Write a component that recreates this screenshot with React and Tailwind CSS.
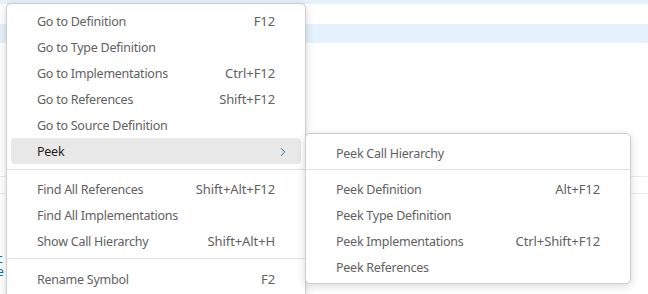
import { ChevronRight } from "lucide-react";

const mainItems = [
  { label: "Go to Definition", key: "F12" },
  { label: "Go to Type Definition" },
  { label: "Go to Implementations", key: "Ctrl+F12" },
  { label: "Go to References", key: "Shift+F12" },
  { label: "Go to Source Definition" },
  { label: "Peek", submenu: true, active: true },
  { sep: true },
  { label: "Find All References", key: "Shift+Alt+F12" },
  { label: "Find All Implementations" },
  { label: "Show Call Hierarchy", key: "Shift+Alt+H" },
  { sep: true, last: true },
  { label: "Rename Symbol", key: "F2" },
];

const peekItems = [
  { label: "Peek Call Hierarchy" },
  { sep: true },
  { label: "Peek Definition", key: "Alt+F12" },
  { label: "Peek Type Definition" },
  { label: "Peek Implementations", key: "Ctrl+Shift+F12" },
  { label: "Peek References" },
];

function MenuRow({ item }) {
  return (
    <div
      className={`mx-[4px] h-[26px] pt-[2px] flex items-center pl-[26px] pr-[26px] rounded-[4px] ${
        item.active ? "bg-[#e8e8e8] text-[#1f1f1f]" : "text-[#616161]"
      }`}
    >
      <span className="flex-1 whitespace-nowrap tracking-[-0.25px]">{item.label}</span>
      {item.key && <span className="whitespace-nowrap text-[13px] tracking-[-0.1px]">{item.key}</span>}
      {item.submenu && (
        <ChevronRight className="w-[14px] h-[14px] text-[#2f5a86] -mr-[15px]" strokeWidth={1.6} />
      )}
    </div>
  );
}

function Separator({ className }) {
  return <div className={`h-px bg-[#e0e0e0] ${className}`} />;
}

export default function App() {
  return (
    <div
      className="relative w-[648px] h-[294px] overflow-hidden bg-white text-[12.5px]"
      style={{ fontFamily: '"Noto Sans", "Open Sans", sans-serif' }}
    >
      {/* editor background */}
      <div className="h-[4px] bg-[#e5f1fb]" />
      <div className="h-[20px]" />
      <div className="h-[19px] bg-[#e5f1fb]" />
      <div className="absolute left-0 right-0 top-[176px] h-px bg-[#ebebeb]" />
      <div className="absolute left-0 right-0 top-[193px] h-px bg-[#ebebeb]" />
      <div className="absolute left-0 top-[252px] text-[12px] leading-[13px] text-[#0070c1] -ml-[3px]">
        <div>c</div>
        <div>e</div>
      </div>

      {/* main context menu */}
      <div className="absolute left-[6px] top-[3px] w-[300px] h-[300px] bg-white border border-[#cecece] rounded-[5px] shadow-[0_2px_8px_rgba(0,0,0,0.16)] pt-[4px]">
        {mainItems.map((item, i) =>
          item.sep ? (
            <Separator key={i} className={item.last ? "mt-[4px] mb-[7px]" : "mt-[5px] mb-[6px]"} />
          ) : (
            <MenuRow key={i} item={item} />
          )
        )}
      </div>

      {/* peek submenu */}
      <div className="absolute left-[305px] top-[133px] w-[326px] bg-white border border-[#cecece] rounded-[5px] shadow-[0_2px_8px_rgba(0,0,0,0.16)] pt-[6px] pb-[3px]">
        {peekItems.map((item, i) =>
          item.sep ? (
            <Separator key={i} className="mt-[3px] mb-[6px]" />
          ) : (
            <MenuRow key={i} item={item} />
          )
        )}
      </div>
    </div>
  );
}
